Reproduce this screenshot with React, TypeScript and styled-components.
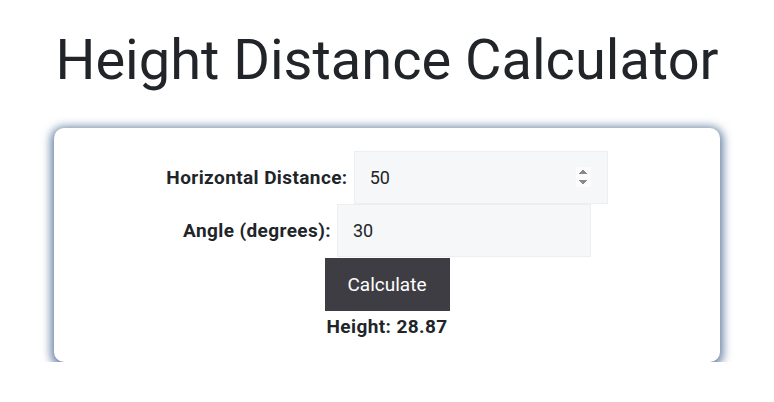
import React, { useState } from "react";
import styled, { createGlobalStyle } from "styled-components";

const GlobalStyle = createGlobalStyle`
  html, body {
    margin: 0;
    padding: 0;
    background: #ffffff;
  }
  body {
    font-family: Roboto, "Liberation Sans", sans-serif;
    color: #212529;
  }
`;

const Page = styled.div`
  display: flex;
  flex-direction: column;
  align-items: center;
  padding: 0 53px;
`;

const Title = styled.h1`
  margin: 20px 0 0;
  font-size: 56px;
  font-weight: 400;
  line-height: 80px;
  white-space: nowrap;
  color: #212529;
`;

const Card = styled.div`
  box-sizing: border-box;
  width: 666px;
  margin-top: 28px;
  padding: 23px 0 24px;
  background: #ffffff;
  border-radius: 10px;
  box-shadow: 0 2px 10px 3px rgba(62, 96, 140, 0.8);
  display: flex;
  flex-direction: column;
  align-items: center;
`;

const Row = styled.div`
  display: flex;
  align-items: center;
  gap: 6px;
`;

const Label = styled.label`
  font-size: 19px;
  font-weight: 700;
  letter-spacing: 0.4px;
`;

const Input = styled.input`
  box-sizing: border-box;
  width: 254px;
  height: 53px;
  padding: 0 16px 0 15px;
  border: 1px solid #eceef0;
  background: #f6f7f9;
  font-family: inherit;
  font-size: 18px;
  color: #212529;
  outline: none;

  &::-webkit-inner-spin-button {
    opacity: 1;
  }
`;

const Button = styled.button`
  margin-top: 1px;
  height: 53px;
  padding: 0 23px;
  border: none;
  background: #3e3d44;
  color: #ffffff;
  font-family: inherit;
  font-size: 19px;
  cursor: pointer;
`;

const Result = styled.div`
  margin-top: 4px;
  font-size: 19px;
  font-weight: 700;
  letter-spacing: 0.4px;
`;

export default function App() {
  const [distance, setDistance] = useState("50");
  const [angle, setAngle] = useState("30");
  const [height, setHeight] = useState(28.87);

  const calculate = () => {
    const d = parseFloat(distance);
    const a = parseFloat(angle);
    setHeight(Math.round(d * Math.tan((a * Math.PI) / 180) * 100) / 100);
  };

  return (
    <>
      <GlobalStyle />
      <Page>
        <Title>Height Distance Calculator</Title>
        <Card>
          <Row>
            <Label>Horizontal Distance:</Label>
            <Input type="number" value={distance} onChange={(e) => setDistance(e.target.value)} />
          </Row>
          <Row>
            <Label>Angle (degrees):</Label>
            <Input type="text" value={angle} onChange={(e) => setAngle(e.target.value)} />
          </Row>
          <Button onClick={calculate}>Calculate</Button>
          <Result>Height: {height.toFixed(2)}</Result>
        </Card>
      </Page>
    </>
  );
}
